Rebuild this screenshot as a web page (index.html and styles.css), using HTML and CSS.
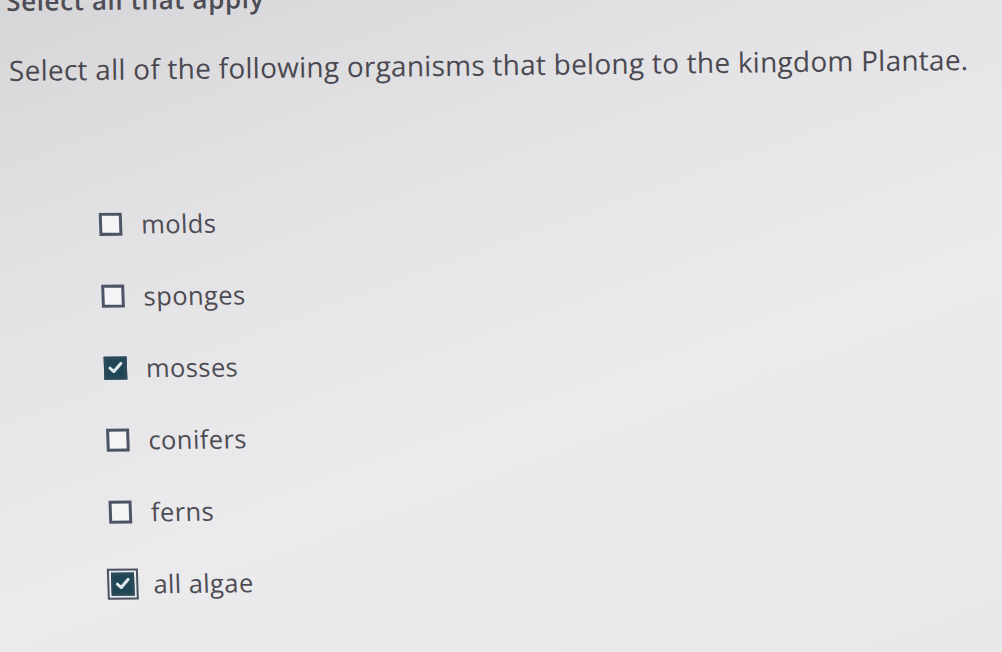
FILE: index.html
```html
<!DOCTYPE html>
<html lang="en">
<head>
    <meta charset="UTF-8">
    <meta name="viewport" content="width=device-width, initial-scale=1.0">
    <title>Select all that apply</title>
    <link rel="stylesheet" href="styles.css">
</head>
<body>
    <main class="question">
        <p class="hint">Select all that apply</p>
        <h1 class="prompt">Select all of the following organisms that belong to the kingdom Plantae.</h1>

        <ul class="choices">
            <li class="choice"><span class="box"></span><span class="label">molds</span></li>
            <li class="choice"><span class="box"></span><span class="label">sponges</span></li>
            <li class="choice"><span class="box checked"><svg viewBox="0 0 20 20"><path d="M3.5 10.5 L8 14.5 L16.5 5" /></svg></span><span class="label">mosses</span></li>
            <li class="choice"><span class="box"></span><span class="label">conifers</span></li>
            <li class="choice"><span class="box"></span><span class="label">ferns</span></li>
            <li class="choice focus"><span class="box checked"><svg viewBox="0 0 20 20"><path d="M3.5 10.5 L8 14.5 L16.5 5" /></svg></span><span class="label">all algae</span></li>
        </ul>
    </main>
</body>
</html>
```

FILE: styles.css
```css
html, body {
    height: 100%;
}
body {
    margin: 0;
    overflow: hidden;
    font-family: 'Open Sans', 'Lato', sans-serif;
    color: #4a4850;
    background: linear-gradient(160deg, #d6d5d8 0%, #e3e2e5 30%, #ebeaed 60%, #e8e7ea 100%);
}
.question {
    padding: 0 0 0 6px;
    transform: rotate(-0.65deg);
    transform-origin: 0 0;
}
.hint {
    margin: -12px 0 0;
    font-size: 26px;
    font-weight: 600;
    color: #4e4c54;
    line-height: 26px;
    letter-spacing: 0.6px;
}
.prompt {
    margin: 38px 0 0 2px;
    font-size: 28px;
    font-weight: 400;
    line-height: 36px;
    color: #4a4850;
    letter-spacing: 0.25px;
}
.choices {
    list-style: none;
    margin: 120px 0 0 90px;
    padding: 0;
    transform: skewX(1.3deg);
    transform-origin: 0 0;
}
.choice {
    display: flex;
    align-items: center;
    height: 34px;
    margin-bottom: 38px;
}
.box {
    box-sizing: border-box;
    width: 23px;
    height: 23px;
    border: 3px solid #4d5466;
    background: #f4f4f6;
    display: flex;
    align-items: center;
    justify-content: center;
}
.box.checked {
    background: #1f4656;
    border-color: #2a4a5a;
}
.box svg {
    width: 20px;
    height: 20px;
}
.box svg path {
    fill: none;
    stroke: #dfe8ec;
    stroke-width: 3.6;
    stroke-linecap: round;
    stroke-linejoin: round;
}
.focus .box {
    outline: 2px solid #4a5262;
    outline-offset: 2px;
}
.label {
    margin-left: 19px;
    font-size: 25.5px;
    color: #4d4b53;
    letter-spacing: 0.4px;
}
```
